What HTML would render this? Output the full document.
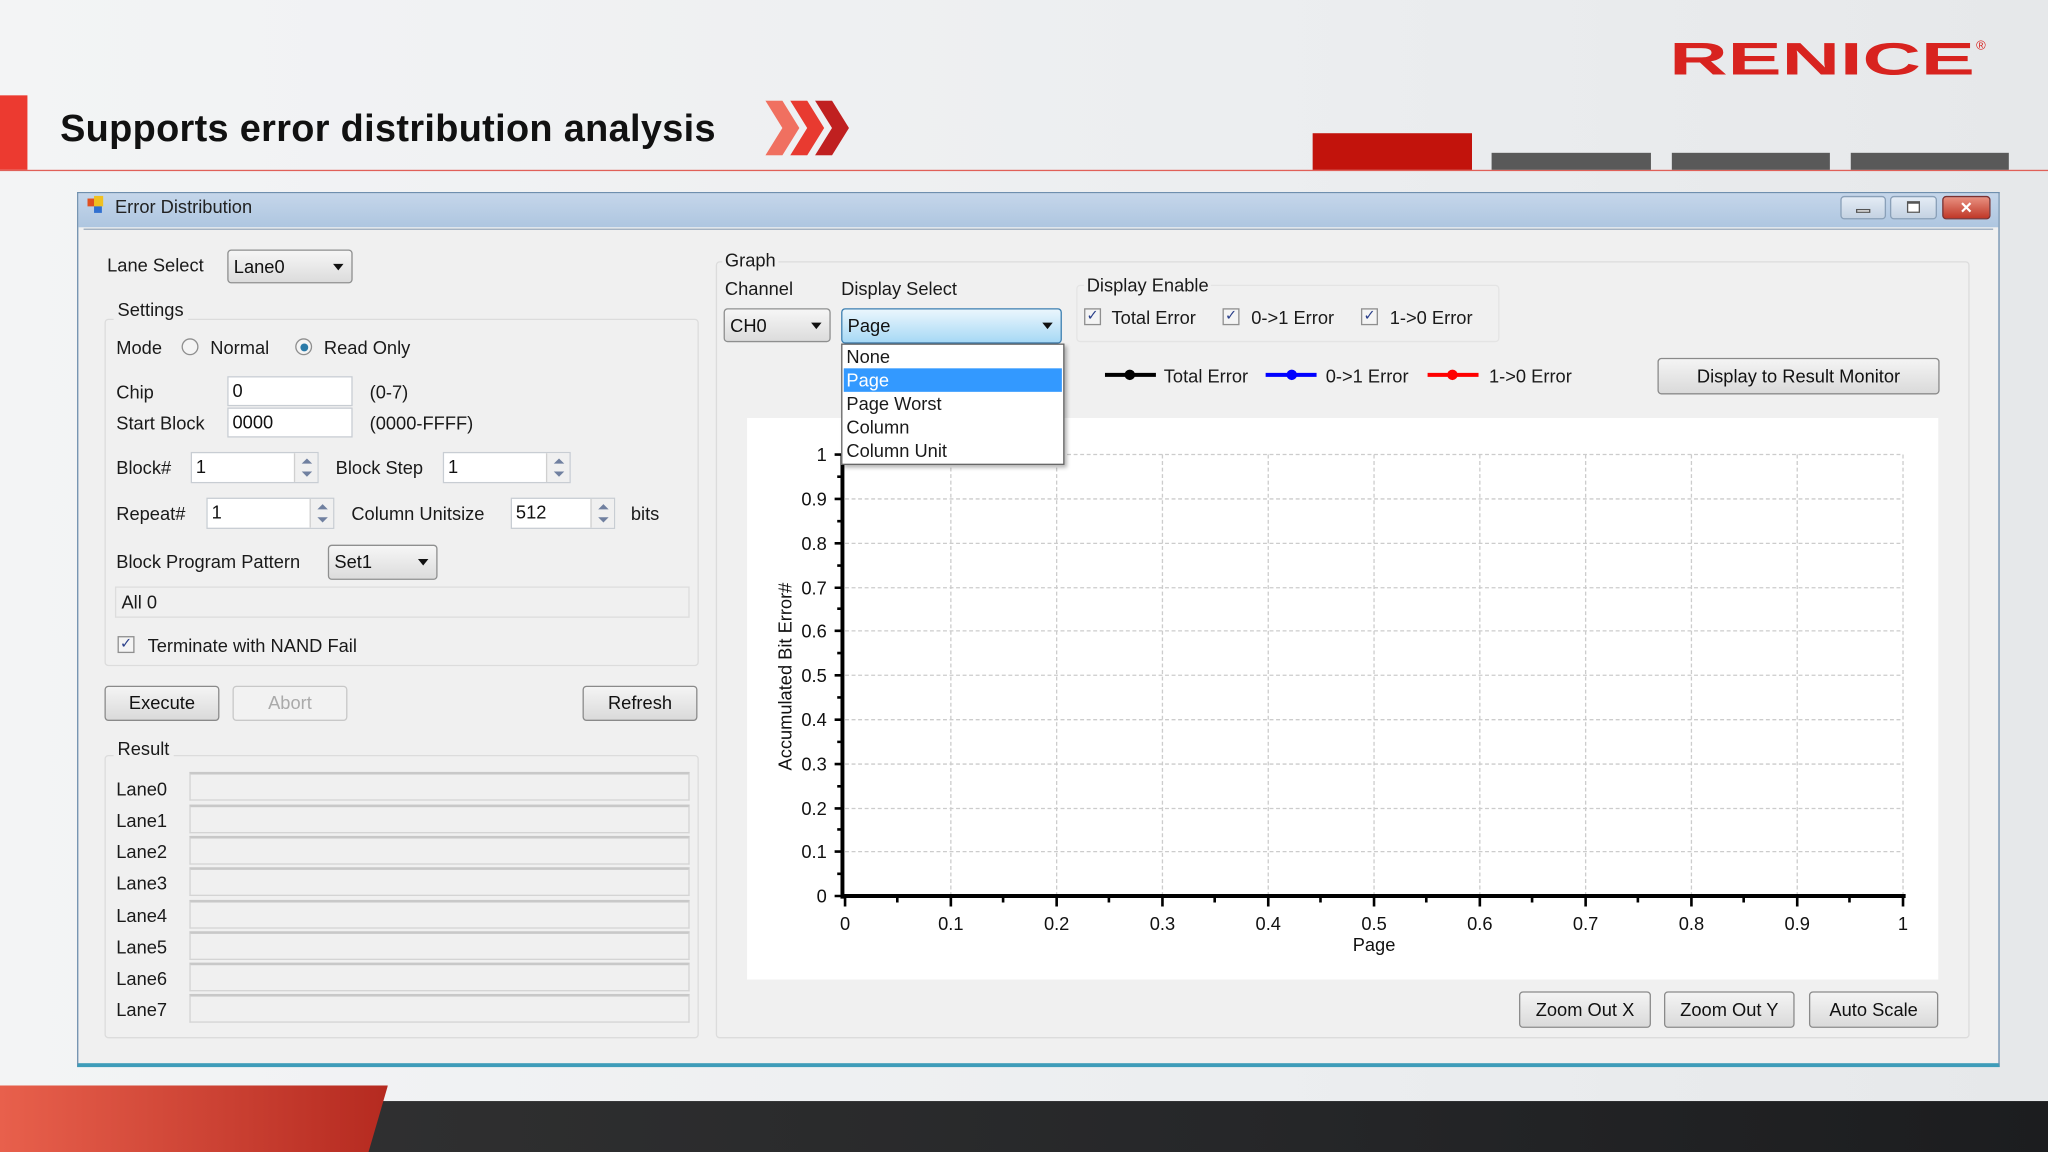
<!DOCTYPE html>
<html><head><meta charset="utf-8"><style>
*{margin:0;padding:0;box-sizing:border-box}
html,body{width:2048px;height:1152px;overflow:hidden;background:#eceef0}
#s{position:absolute;left:0;top:0;width:1568px;height:882px;transform:scale(1.3061225);transform-origin:0 0;font-family:"Liberation Sans",Arial,sans-serif;background:linear-gradient(90deg,#f3f4f5,#eceef0 60%,#e6e8ea)}
.a{position:absolute}
.t{position:absolute;font-size:14px;color:#1a1a1a;white-space:nowrap;line-height:16px}
.in{position:absolute;background:#fff;border:1px solid #c8cdd3;font-size:14px;padding-left:3px;line-height:20px;color:#111}
.cb{position:absolute;border:1px solid #8e8f8f;border-radius:3px;background:linear-gradient(#f6f6f6,#dcdcdc);font-size:14px;padding-left:4px;line-height:22px;color:#111}
.cb:after{content:"";position:absolute;right:6px;top:10px;border:4px solid transparent;border-top:5px solid #111}
.btn{position:absolute;border:1px solid #8a8a8a;border-radius:3px;background:linear-gradient(#f4f4f4,#dadada);font-size:14px;text-align:center;color:#111}
.grp{position:absolute;border:1px solid #dcdcdc;border-radius:3px}
.sp{position:absolute;right:0;top:0;width:18px;height:100%;border-left:1px solid #d0d0d0;background:#f0f0f0}
.sp:before{content:"";position:absolute;left:5px;top:4px;border:4px solid transparent;border-bottom:4px solid #7080a0;border-top:0}
.sp:after{content:"";position:absolute;left:5px;bottom:4px;border:4px solid transparent;border-top:4px solid #7080a0;border-bottom:0}
.chk{position:absolute;width:13px;height:13px;border:1px solid #8f8f8f;background:#f4f4f4;font-size:11px;line-height:11px;text-align:center;color:#2a3f8a}
.rad{position:absolute;width:13px;height:13px;border:1px solid #8f8f8f;border-radius:50%;background:#f4f4f4}
.fld{position:absolute;left:145px;width:383px;height:22px;background:#f0f0f0;border:1px solid #d4d4d4;border-top:2px solid #c8c8c8}
</style></head><body><div id="s">
<!-- header -->
<div class="a" style="left:0;top:73px;width:21px;height:57px;background:#ec3a30"></div>
<div class="t" style="left:46px;top:83px;font-size:29px;line-height:33px;letter-spacing:0.25px;font-weight:bold;color:#111">Supports error distribution analysis</div>
<svg class="a" style="left:586px;top:77px" width="66" height="42"><polygon points="0,0 13,0 26,21 13,42 0,42 13,21" fill="#f07060"/><polygon points="19,0 32,0 45,21 32,42 19,42 32,21" fill="#e83a30"/><polygon points="38,0 51,0 64,21 51,42 38,42 51,21" fill="#c02020"/></svg>
<div class="a" style="left:0;top:130px;width:1568px;height:1px;background:#e06058"></div>
<div class="a" style="left:1005px;top:102px;width:122px;height:28px;background:#c2130c"></div>
<div class="a" style="left:1142px;top:117px;width:122px;height:13px;background:#595959"></div>
<div class="a" style="left:1280px;top:117px;width:121px;height:13px;background:#595959"></div>
<div class="a" style="left:1417px;top:117px;width:121px;height:13px;background:#595959"></div>
<svg class="a" style="left:1276px;top:28px" width="250" height="34"><text x="2" y="29" font-family="Liberation Sans,Arial,sans-serif" font-weight="bold" font-size="35" fill="#d8231f" textLength="234" lengthAdjust="spacingAndGlyphs">RENICE</text></svg>
<div class="t" style="left:1513px;top:28px;font-size:10px;color:#d8231f">®</div>
<!-- window -->
<div class="a" style="left:59px;top:147px;width:1472px;height:670px;background:#f0f0f0;border:1px solid #6f8fae;border-bottom:3px solid #3e9cb9"></div>
<div class="a" style="left:60px;top:148px;width:1470px;height:26px;background:linear-gradient(#c5d6ea,#aec6e0)"></div>
<div class="a" style="left:67px;top:152px;width:6px;height:6px;background:#e05020"></div><div class="a" style="left:72px;top:150px;width:7px;height:8px;background:#f0c020"></div><div class="a" style="left:72px;top:158px;width:6px;height:5px;background:#3070d0"></div>
<div class="t" style="left:88px;top:150px;color:#222">Error Distribution</div>
<div class="a" style="left:1409px;top:150px;width:35px;height:18px;border:1px solid #8aa0b8;border-radius:3px;background:linear-gradient(#e4ecf5,#c4d2e2)"><div class="a" style="left:11px;top:9px;width:11px;height:3px;border:1px solid #555;background:#fff"></div></div>
<div class="a" style="left:1447px;top:150px;width:36px;height:18px;border:1px solid #8aa0b8;border-radius:3px;background:linear-gradient(#e4ecf5,#c4d2e2)"><div class="a" style="left:12px;top:3px;width:10px;height:9px;border:1px solid #555;border-top-width:2px;background:#fff"></div></div>
<div class="a" style="left:1487px;top:150px;width:37px;height:18px;border:1px solid #7a3030;border-radius:3px;background:linear-gradient(#e89080,#c03828);color:#fff;font-size:12px;text-align:center;line-height:16px;font-weight:bold">✕</div>
<div class="a" style="left:64px;top:175px;width:1462px;height:1px;background:#9ab"></div>
<!-- left -->
<div class="t" style="left:82px;top:195px">Lane Select</div>
<div class="cb" style="left:174px;top:191px;width:96px;height:26px;line-height:24px">Lane0</div>
<div class="grp" style="left:80px;top:244px;width:455px;height:266px"></div>
<div class="t" style="left:87px;top:229px;background:#f0f0f0;padding:0 3px">Settings</div>
<div class="t" style="left:89px;top:258px">Mode</div>
<div class="rad" style="left:139px;top:259px"></div><div class="t" style="left:161px;top:258px">Normal</div>
<div class="rad" style="left:226px;top:259px"></div><div class="a" style="left:230px;top:263px;width:6px;height:6px;border-radius:50%;background:#2a7aa8"></div><div class="t" style="left:248px;top:258px">Read Only</div>
<div class="t" style="left:89px;top:292px">Chip</div><div class="in" style="left:174px;top:288px;width:96px;height:23px">0</div><div class="t" style="left:283px;top:292px">(0-7)</div>
<div class="t" style="left:89px;top:316px">Start Block</div><div class="in" style="left:174px;top:312px;width:96px;height:23px">0000</div><div class="t" style="left:283px;top:316px">(0000-FFFF)</div>
<div class="t" style="left:89px;top:350px">Block#</div><div class="in" style="left:146px;top:346px;width:98px;height:24px">1<div class="sp"></div></div>
<div class="t" style="left:257px;top:350px">Block Step</div><div class="in" style="left:339px;top:346px;width:98px;height:24px">1<div class="sp"></div></div>
<div class="t" style="left:89px;top:385px">Repeat#</div><div class="in" style="left:158px;top:381px;width:98px;height:24px">1<div class="sp"></div></div>
<div class="t" style="left:269px;top:385px">Column Unitsize</div><div class="in" style="left:391px;top:381px;width:80px;height:24px">512<div class="sp"></div></div><div class="t" style="left:483px;top:385px">bits</div>
<div class="t" style="left:89px;top:422px">Block Program Pattern</div>
<div class="cb" style="left:251px;top:417px;width:84px;height:27px;line-height:25px">Set1</div>
<div class="a" style="left:88px;top:449px;width:440px;height:24px;border:1px solid #ddd;background:#f0f0f0"></div><div class="t" style="left:93px;top:453px">All 0</div>
<div class="chk" style="left:90px;top:487px">✓</div><div class="t" style="left:113px;top:486px">Terminate with NAND Fail</div>
<div class="btn" style="left:80px;top:525px;width:88px;height:27px;line-height:25px">Execute</div>
<div class="btn" style="left:178px;top:525px;width:88px;height:27px;line-height:25px;border-color:#c8c8c8;background:#f2f2f2;color:#aaa">Abort</div>
<div class="btn" style="left:446px;top:525px;width:88px;height:27px;line-height:25px">Refresh</div>
<div class="grp" style="left:80px;top:578px;width:455px;height:217px"></div>
<div class="t" style="left:87px;top:565px;background:#f0f0f0;padding:0 3px">Result</div>
<div class="t" style="left:89px;top:596px">Lane0</div><div class="fld" style="top:591px"></div>
<div class="t" style="left:89px;top:620px">Lane1</div><div class="fld" style="top:616px"></div>
<div class="t" style="left:89px;top:644px">Lane2</div><div class="fld" style="top:640px"></div>
<div class="t" style="left:89px;top:668px">Lane3</div><div class="fld" style="top:664px"></div>
<div class="t" style="left:89px;top:693px">Lane4</div><div class="fld" style="top:689px"></div>
<div class="t" style="left:89px;top:717px">Lane5</div><div class="fld" style="top:713px"></div>
<div class="t" style="left:89px;top:741px">Lane6</div><div class="fld" style="top:737px"></div>
<div class="t" style="left:89px;top:765px">Lane7</div><div class="fld" style="top:761px"></div>
<!-- right -->
<div class="grp" style="left:548px;top:200px;width:960px;height:595px"></div>
<div class="t" style="left:553px;top:191px;background:#f0f0f0;padding:0 2px">Graph</div>
<div class="t" style="left:555px;top:213px">Channel</div>
<div class="t" style="left:644px;top:213px">Display Select</div>
<div class="cb" style="left:554px;top:236px;width:82px;height:26px;line-height:24px">CH0</div>
<div class="cb" style="left:644px;top:236px;width:169px;height:27px;line-height:25px;border-color:#3c7fb1;background:linear-gradient(#eaf6fd,#a7d9f5)">Page</div>
<div class="grp" style="left:824px;top:218px;width:324px;height:44px;border-color:#e4e4e4"></div>
<div class="t" style="left:830px;top:210px;background:#f0f0f0;padding:0 2px">Display Enable</div>
<div class="chk" style="left:830px;top:236px">✓</div><div class="t" style="left:851px;top:235px">Total Error</div>
<div class="chk" style="left:936px;top:236px">✓</div><div class="t" style="left:958px;top:235px">0-&gt;1 Error</div>
<div class="chk" style="left:1042px;top:236px">✓</div><div class="t" style="left:1064px;top:235px">1-&gt;0 Error</div>
<svg class="a" style="left:840px;top:278px" width="300" height="20"><g stroke-width="3"><line x1="6" y1="9" x2="45" y2="9" stroke="#000"/><line x1="129" y1="9" x2="168" y2="9" stroke="#0000ff"/><line x1="253" y1="9" x2="292" y2="9" stroke="#ff0000"/></g><circle cx="25" cy="9" r="4" fill="#000"/><circle cx="149" cy="9" r="4" fill="#00f"/><circle cx="272" cy="9" r="4" fill="#f00"/></svg>
<div class="t" style="left:891px;top:280px">Total Error</div>
<div class="t" style="left:1015px;top:280px">0-&gt;1 Error</div>
<div class="t" style="left:1140px;top:280px">1-&gt;0 Error</div>
<div class="btn" style="left:1269px;top:274px;width:216px;height:28px;line-height:26px">Display to Result Monitor</div>
<div class="a" style="left:572px;top:320px;width:912px;height:430px;background:#fff"></div>
<svg class="a" style="left:572px;top:320px" width="912" height="430" font-family="Liberation Sans,Arial,sans-serif" font-size="14" fill="#111">
<g stroke="#ccc" stroke-dasharray="3,2" stroke-width="1">
<line x1="156" y1="28" x2="156" y2="366"/><line x1="237" y1="28" x2="237" y2="366"/><line x1="318" y1="28" x2="318" y2="366"/><line x1="399" y1="28" x2="399" y2="366"/><line x1="480" y1="28" x2="480" y2="366"/><line x1="561" y1="28" x2="561" y2="366"/><line x1="642" y1="28" x2="642" y2="366"/><line x1="723" y1="28" x2="723" y2="366"/><line x1="804" y1="28" x2="804" y2="366"/><line x1="885" y1="28" x2="885" y2="366"/>
<line x1="75" y1="28" x2="885" y2="28"/><line x1="75" y1="62" x2="885" y2="62"/><line x1="75" y1="96" x2="885" y2="96"/><line x1="75" y1="130" x2="885" y2="130"/><line x1="75" y1="163" x2="885" y2="163"/><line x1="75" y1="197" x2="885" y2="197"/><line x1="75" y1="231" x2="885" y2="231"/><line x1="75" y1="265" x2="885" y2="265"/><line x1="75" y1="299" x2="885" y2="299"/><line x1="75" y1="332" x2="885" y2="332"/>
</g>
<g stroke="#000" stroke-width="3"><line x1="73" y1="28" x2="73" y2="368"/><line x1="72" y1="366" x2="887" y2="366"/></g>
<g stroke="#000" stroke-width="2">
<path d="M67 28h6M67 62h6M67 96h6M67 130h6M67 163h6M67 197h6M67 231h6M67 265h6M67 299h6M67 332h6M67 366h6M69 45h4M69 79h4M69 113h4M69 146h4M69 180h4M69 214h4M69 248h4M69 282h4M69 315h4M69 349h4"/>
<path d="M75 366v8M156 366v8M237 366v8M318 366v8M399 366v8M480 366v8M561 366v8M642 366v8M723 366v8M804 366v8M885 366v8M115 366v5M196 366v5M277 366v5M358 366v5M439 366v5M520 366v5M601 366v5M682 366v5M763 366v5M844 366v5"/>
</g>
<g text-anchor="end"><text x="61" y="33">1</text><text x="61" y="67">0.9</text><text x="61" y="101">0.8</text><text x="61" y="135">0.7</text><text x="61" y="168">0.6</text><text x="61" y="202">0.5</text><text x="61" y="236">0.4</text><text x="61" y="270">0.3</text><text x="61" y="304">0.2</text><text x="61" y="337">0.1</text><text x="61" y="371">0</text></g>
<g text-anchor="middle"><text x="75" y="392">0</text><text x="156" y="392">0.1</text><text x="237" y="392">0.2</text><text x="318" y="392">0.3</text><text x="399" y="392">0.4</text><text x="480" y="392">0.5</text><text x="561" y="392">0.6</text><text x="642" y="392">0.7</text><text x="723" y="392">0.8</text><text x="804" y="392">0.9</text><text x="885" y="392">1</text><text x="480" y="408">Page</text>
<text transform="translate(34,198) rotate(-90)">Accumulated Bit Error#</text></g>
</svg>
<!-- dropdown -->
<div class="a" style="left:644px;top:263px;width:171px;height:93px;background:#fff;border:1px solid #646464;box-shadow:2px 2px 3px rgba(0,0,0,.3)"></div>
<div class="a" style="left:646px;top:282px;width:167px;height:18px;background:#3399ff"></div>
<div class="t" style="left:648px;top:265px">None</div>
<div class="t" style="left:648px;top:283px;color:#fff">Page</div>
<div class="t" style="left:648px;top:301px">Page Worst</div>
<div class="t" style="left:648px;top:319px">Column</div>
<div class="t" style="left:648px;top:337px">Column Unit</div>
<div class="btn" style="left:1163px;top:759px;width:101px;height:28px;line-height:26px">Zoom Out X</div>
<div class="btn" style="left:1274px;top:759px;width:100px;height:28px;line-height:26px">Zoom Out Y</div>
<div class="btn" style="left:1385px;top:759px;width:99px;height:28px;line-height:26px">Auto Scale</div>
<!-- footer -->
<div class="a" style="left:0;top:843px;width:1568px;height:39px;background:linear-gradient(90deg,#333,#262729 60%,#1c1d1f)"></div>
<div class="a" style="left:0;top:831px;width:297px;height:51px;background:linear-gradient(90deg,#e8604c,#b52a20);clip-path:polygon(0 0,100% 0,95% 100%,0 100%)"></div>
</div></body></html>
